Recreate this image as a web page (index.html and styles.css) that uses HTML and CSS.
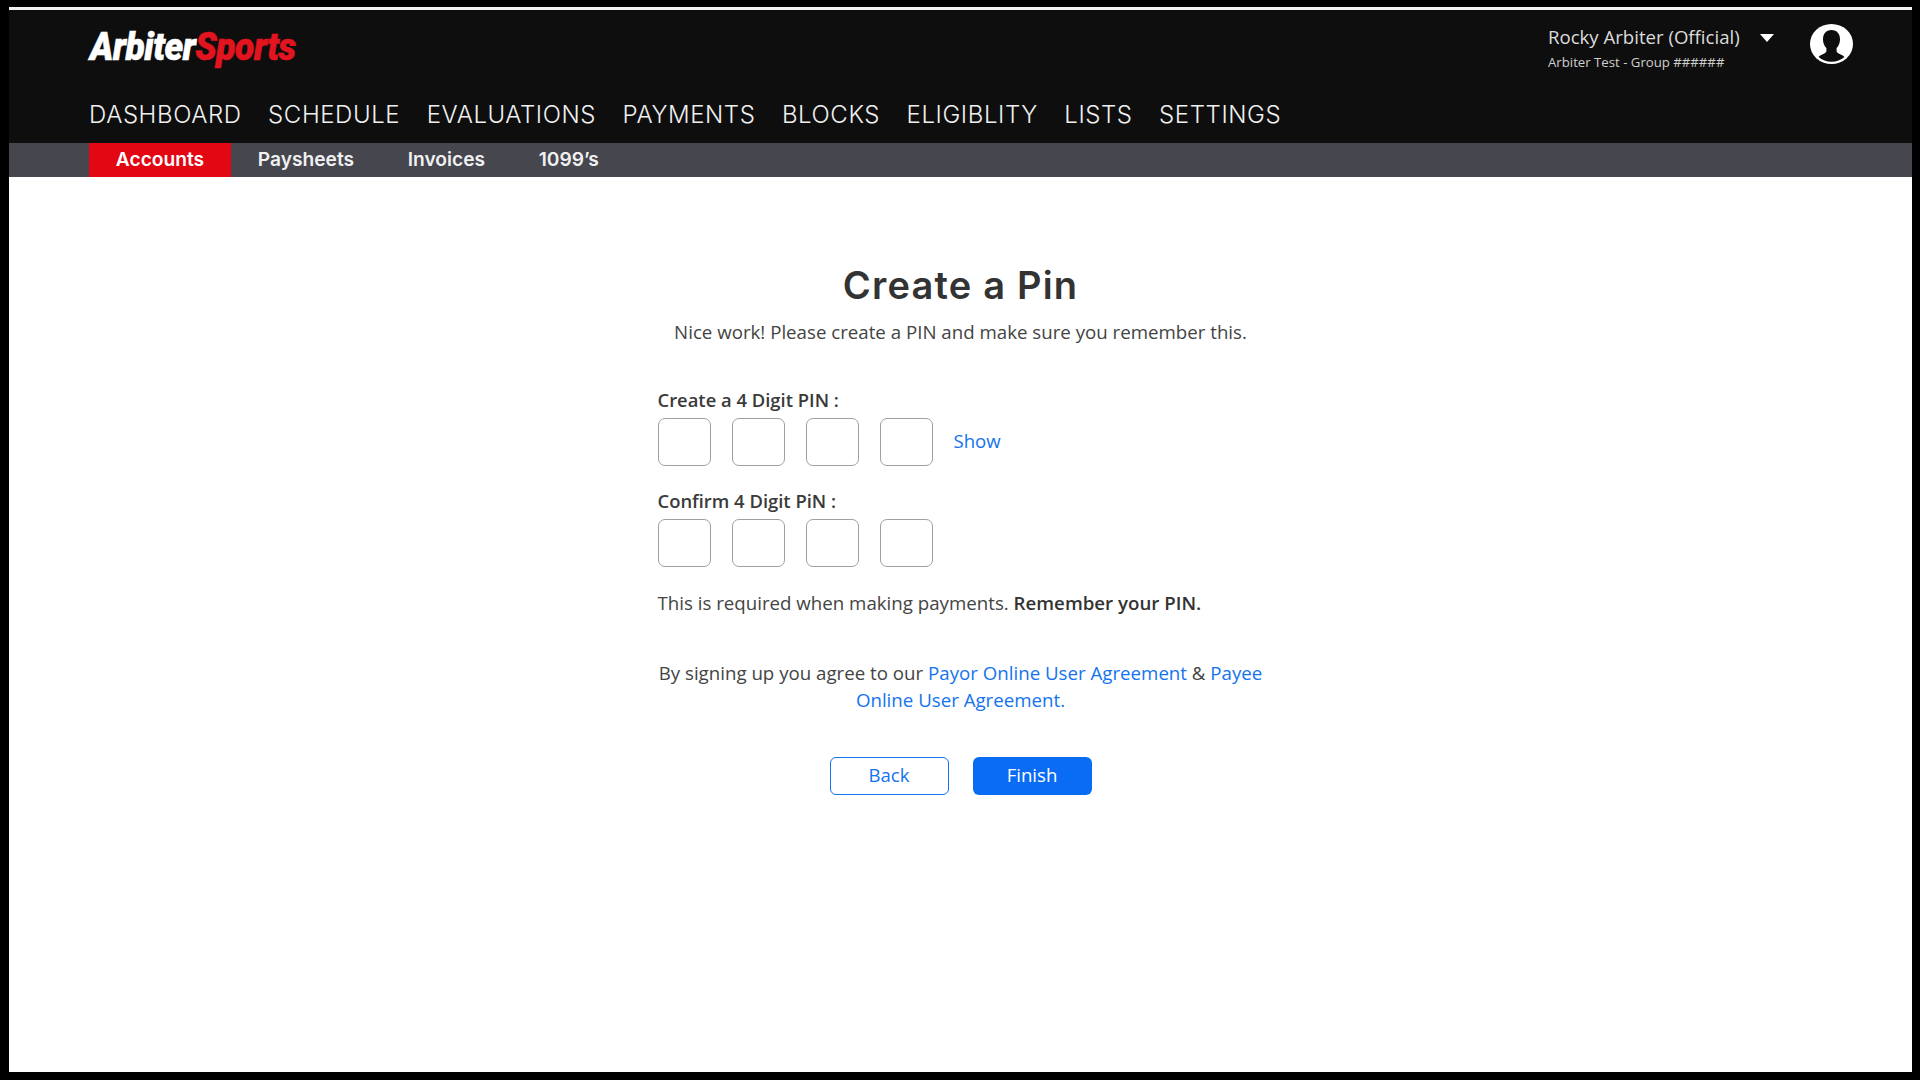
FILE: index.html
```html
<!DOCTYPE html>
<html lang="en">
<head>
<meta charset="utf-8">
<title>Create a Pin - ArbiterSports</title>
<link rel="stylesheet" href="styles.css">
</head>
<body>
<div class="app">
  <header class="topbar">
    <div class="brand-row">
      <div class="logo"><span class="logo-white">Arbiter</span><span class="logo-red">Sports</span></div>
      <div class="account">
        <div class="account-text">
          <div class="account-name">Rocky Arbiter (Official)</div>
          <div class="account-group">Arbiter Test - Group ######</div>
        </div>
        <svg class="caret" viewBox="0 0 14 8" width="14" height="8"><path d="M0 0H14L7 8Z" fill="#fff"/></svg>
        <svg class="avatar" viewBox="0 0 43 40" width="43" height="40">
          <ellipse cx="21.5" cy="20" rx="21.5" ry="20" fill="#fff"/>
          <path d="M21.500 6c-5.600 0-8.500 4-8.500 9.200 0 3.700 1.300 6.900 3.400 8.900v3c0 1.200-1 2-2.400 2.600-2.500 1-4.300 1.900-5.400 3.200a18.500 17 0 0 0 25.800 0c-1.100-1.300-2.900-2.200-5.400-3.200-1.400-.6-2.400-1.400-2.400-2.600v-3c2.100-2 3.400-5.200 3.400-8.900 0-5.200-2.900-9.200-8.500-9.200z" fill="#0d0d0d"/>
        </svg>
      </div>
    </div>
    <nav class="mainnav">
      <a>DASHBOARD</a><a>SCHEDULE</a><a>EVALUATIONS</a><a>PAYMENTS</a><a>BLOCKS</a><a>ELIGIBLITY</a><a>LISTS</a><a>SETTINGS</a>
    </nav>
  </header>
  <nav class="subnav">
    <a class="active">Accounts</a><a>Paysheets</a><a>Invoices</a><a>1099’s</a>
  </nav>
  <main class="content">
    <h1 class="title">Create a Pin</h1>
    <p class="intro">Nice work! Please create a PIN and make sure you remember this.</p>
    <div class="form">
      <div class="field">
        <div class="field-label">Create a 4 Digit PIN :</div>
        <div class="pin-row">
          <span class="pin"></span><span class="pin"></span><span class="pin"></span><span class="pin"></span>
          <a class="link show">Show</a>
        </div>
      </div>
      <div class="field">
        <div class="field-label">Confirm 4 Digit PiN :</div>
        <div class="pin-row">
          <span class="pin"></span><span class="pin"></span><span class="pin"></span><span class="pin"></span>
        </div>
      </div>
      <p class="note">This is required when making payments. <strong>Remember your PIN.</strong></p>
      <p class="agree">By signing up you agree to our <a class="link">Payor Online User Agreement</a> &amp; <a class="link">Payee Online User Agreement.</a></p>
    </div>
    <div class="actions">
      <button class="btn btn-outline">Back</button>
      <button class="btn btn-solid">Finish</button>
    </div>
  </main>
</div>
</body>
</html>
```
FILE: styles.css
```css
* { box-sizing: border-box; }
html, body { height: 100%; }
body {
  margin: 0;
  background: #000;
  padding: 7px 8px 8px 9px;
  font-family: "Open Sans", "Liberation Sans", sans-serif;
  color: #3c3c3c;
}
.app {
  height: 1065px;
  display: flex;
  flex-direction: column;
  background: #fff;
  border-top: 3px solid #f2f2f2;
}
.topbar {
  height: 133px;
  background: #0e0e0e;
  padding: 0 59px 0 80px;
  display: flex;
  flex-direction: column;
}
.brand-row {
  display: flex;
  justify-content: space-between;
  height: 90px;
}
.logo {
  font-family: Roboto, "Liberation Sans", sans-serif;
  font-weight: 900;
  font-style: italic;
  font-size: 38px;
  line-height: 1;
  margin: 18px 0 0 1px;
  letter-spacing: -0.5px;
  -webkit-text-stroke: 0.6px currentColor;
  transform: scaleX(0.93);
  transform-origin: left center;
}
.logo-white { color: #fff; }
.logo-red { color: #e2141f; }
.account {
  display: flex;
  align-items: flex-start;
}
.account-text { margin-top: 15px; width: 212px; }
.account-name { font-size: 18.600px; line-height: 24px; color: #dcdcdc; }
.account-group { font-size: 13.200px; line-height: 16px; margin-top: 5px; color: #cfcfcf; }
.caret { margin-top: 24px; }
.avatar { margin: 14px 0 0 36px; }
.mainnav {
  display: flex;
  gap: 26.500px;
  font-family: Inter, "Liberation Sans", sans-serif;
  font-weight: 300;
  font-size: 24px;
  letter-spacing: 0.58px;
  line-height: 30px;
  color: #f0f0f0;
}
.subnav {
  height: 34px;
  background: #45464e;
  padding-left: 80px;
  display: flex;
  font-family: Inter, "Liberation Sans", sans-serif;
  font-weight: 600;
  font-size: 19.200px;
  line-height: 33px;
  color: #f0f0f0;
}
.subnav a { padding: 0 26.800px; }
.subnav a.active { background: #e30613; color: #fff; }
.content {
  flex: 1;
  display: flex;
  flex-direction: column;
  align-items: center;
  padding-top: 84px;
}
.title {
  margin: 0;
  font-family: Inter, "Liberation Sans", sans-serif;
  font-weight: 600;
  font-size: 38px;
  letter-spacing: 1.200px;
  line-height: 48px;
  color: #333;
}
.intro { margin: 11px 0 0; font-size: 18.700px; line-height: 24px; color: #444; }
.form { width: 606px; margin-top: 44px; }
.field { margin-bottom: 23px; }
.field-label { font-size: 18.400px; font-weight: 600; line-height: 24px; color: #3a3a3a; margin-bottom: 6px; }
.pin-row { display: flex; align-items: center; gap: 21px; }
.pin { width: 53px; height: 48px; border: 1.500px solid #a0a0a0; border-radius: 7px; }
.link { color: #1473f0; }
.show { font-size: 18.600px; padding-bottom: 3px; }
.note { margin: 0; font-size: 18.700px; line-height: 26px; color: #444; }
.note strong { font-weight: 600; color: #333; }
.agree { margin: 44px 0 0; text-align: center; font-size: 18.700px; line-height: 26.500px; color: #444; }
.actions { display: flex; gap: 24px; margin-top: 44px; }
.btn {
  width: 119px;
  height: 38px;
  border-radius: 6px;
  font-family: "Open Sans", "Liberation Sans", sans-serif;
  font-size: 18.600px;
  padding: 0 0 3px;
}
.btn-outline { background: #fff; border: 1.500px solid #1473f0; color: #1473f0; }
.btn-solid { background: #0a6cf5; border: 0; color: #fff; }
```
